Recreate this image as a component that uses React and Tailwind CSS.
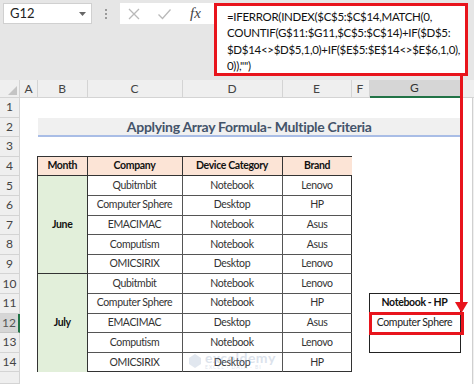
const rows = [
  ['Qubitmbit', 'Notebook', 'Lenovo'],
  ['Computer Sphere', 'Desktop', 'HP'],
  ['EMACIMAC', 'Notebook', 'Asus'],
  ['Computism', 'Notebook', 'Asus'],
  ['OMICSIRIX', 'Desktop', 'Lenovo'],
  ['Qubitmbit', 'Notebook', 'Lenovo'],
  ['Computer Sphere', 'Notebook', 'HP'],
  ['EMACIMAC', 'Desktop', 'Asus'],
  ['Computism', 'Notebook', 'Lenovo'],
  ['OMICSIRIX', 'Desktop', 'HP'],
]

const cols = ['A', 'B', 'C', 'D', 'E', 'F', 'G']

function FormulaBar() {
  return (
    <div className="h-[80px] bg-[#e6e6e6] flex items-start pt-[3px] pl-[3px]">
      <div className="w-[89px] h-[21px] bg-white border border-[#d0d0d0] flex items-center justify-between pl-[6px] pr-[5px] text-[13px] text-[#222]">
        <span>G12</span>
        <svg width="7" height="4" viewBox="0 0 7 4"><path d="M0 0h7L3.5 4z" fill="#666" /></svg>
      </div>
      <div className="w-[28px] h-[21px] flex flex-col items-center justify-center gap-[2px]">
        <span className="w-[2px] h-[2px] bg-[#9a9a9a]" />
        <span className="w-[2px] h-[2px] bg-[#9a9a9a]" />
        <span className="w-[2px] h-[2px] bg-[#9a9a9a]" />
      </div>
      <div className="w-[94px] h-[21px] bg-white flex items-center">
        <svg className="ml-[7px]" width="14" height="14" viewBox="0 0 14 14">
          <path d="M2 2l10 10M12 2L2 12" stroke="#b9b9b9" strokeWidth="1.3" fill="none" />
        </svg>
        <svg className="ml-[16px]" width="15" height="14" viewBox="0 0 15 14">
          <path d="M1.5 7.5l4 4L13.5 2.5" stroke="#b9b9b9" strokeWidth="1.3" fill="none" />
        </svg>
        <span className="ml-[18px] text-[15px] italic text-[#444] font-['Liberation_Serif',serif] leading-none">fx</span>
      </div>
      <div className="w-[254px] h-[73px] bg-white border-[3px] border-[#e8141c] pl-[10px] pt-[3px] text-[11.5px] tracking-[-0.3px] leading-[16.3px] text-[#111] whitespace-pre">
        {'=IFERROR(INDEX($C$5:$C$14,MATCH(0,\nCOUNTIF(G$11:$G11,$C$5:$C$14)+IF($D$5:\n$D$14<>$D$5,1,0)+IF($E$5:$E$14<>$E$6,1,0),\n0)),"")'}
      </div>
    </div>
  )
}

export default function App() {
  return (
    <div className="relative w-[474px] h-[384px] overflow-hidden bg-white font-['Lato',sans-serif]">
      <FormulaBar />

      <div className="grid grid-cols-[20px_18px_49.5px_95px_100px_69px_18px_91px_1fr] grid-rows-[18px_repeat(14,19.6px)_1fr] h-[304px]">
        {/* corner */}
        <div className="bg-[#efefef] border-r border-b border-[#d4d4d4] flex items-end justify-end pr-[2px] pb-[2px]">
          <svg width="9" height="9" viewBox="0 0 9 9"><path d="M9 0v9H0z" fill="#c4c4c4" /></svg>
        </div>
        {cols.map((c) => (
          <div
            key={c}
            className={
              c === 'G'
                ? 'bg-[#d6d6d6] border-b-2 border-[#217346] border-r border-r-[#c6c6c6] flex items-center justify-center text-[12px] text-[#333]'
                : 'bg-[#efefef] border-r border-b border-[#d4d4d4] flex items-center justify-center text-[12px] text-[#444]'
            }
          >
            {c}
          </div>
        ))}
        <div className="bg-[#efefef] border-b border-[#d4d4d4]" />

        {/* row headers */}
        {Array.from({ length: 15 }, (_, i) => (
          <div
            key={i}
            style={{ gridRowStart: i + 2 }}
            className={
              i === 11
                ? 'col-start-1 bg-[#d6d6d6] border-r-2 border-[#217346] border-b border-b-[#c6c6c6] flex items-center justify-center text-[12px] text-[#555]'
                : 'col-start-1 bg-[#efefef] border-r border-b border-[#d4d4d4] flex items-center justify-center text-[12px] text-[#444]'
            }
          >
            {i < 14 ? i + 1 : ''}
          </div>
        ))}

        {/* title */}
        <div className="col-start-3 col-span-6 row-start-3 bg-[#f0f0f0] border-b-2 border-[#a9bde6] flex items-center justify-center text-[14px] tracking-[-0.3px] font-bold text-[#44546a]">
          Applying Array Formula- Multiple Criteria
        </div>

        {/* data table */}
        <div className="col-start-3 col-span-4 row-start-5 row-span-11 grid grid-cols-[49.5px_95px_100px_69px] grid-rows-[repeat(11,19.6px)] border border-[#333] -mt-px -ml-px text-[10.5px] tracking-[-0.35px]">
          {['Month', 'Company', 'Device Category', 'Brand'].map((h, i) => (
            <div
              key={h}
              className={`bg-[#fce4d6] border-b border-[#333] flex items-center justify-center font-bold text-[#111] ${i < 3 ? 'border-r' : ''}`}
            >
              {h}
            </div>
          ))}
          <div className="col-start-1 row-start-2 row-span-5 bg-[#e2efda] border-r border-b border-[#333] flex items-center justify-center font-bold text-[#111]">
            June
          </div>
          <div className="col-start-1 row-start-7 row-span-5 bg-[#e2efda] border-r border-[#333] flex items-center justify-center font-bold text-[#111]">
            July
          </div>
          {rows.map((r, i) =>
            r.map((v, j) => (
              <div
                key={`${i}-${j}`}
                style={{ gridRowStart: i + 2, gridColumnStart: j + 2 }}
                className={`flex items-center justify-center text-[#333] border-[#555] ${j < 2 ? 'border-r' : ''} ${i < 9 ? 'border-b' : ''}`}
              >
                {v}
              </div>
            ))
          )}
        </div>

        {/* result box */}
        <div className="col-start-8 row-start-12 row-span-3 grid grid-rows-[repeat(3,19.6px)] border border-[#222] -mt-px -ml-px text-[10.5px] tracking-[-0.35px]">
          <div className="border-b border-[#222] flex items-center justify-center font-bold text-[#111]">
            Notebook - HP
          </div>
          <div className="border-b border-[#222] flex items-center justify-center text-[#222]">
            Computer Sphere
          </div>
          <div />
        </div>

        {/* right edge */}
        <div className="col-start-9 row-start-2 row-span-15 flex justify-end">
          <div className="w-[2px] border-l border-[#d0d0d0] bg-[#f0f0f0]" />
        </div>
      </div>

      {/* arrow + highlight overlay */}
      <div className="absolute left-[460px] top-[76px] w-[3px] h-[228px] bg-[#e8141c]" />
      <svg className="absolute left-[455px] top-[302px]" width="13" height="11" viewBox="0 0 13 11">
        <path d="M0 0h13L6.5 11z" fill="#e8141c" />
      </svg>
      <div className="absolute left-[369px] top-[312px] w-[95px] h-[23px] border-[3px] border-[#e8141c]" />

      {/* watermark */}
      <div className="absolute left-[188px] top-[351px] flex items-center gap-[3px] opacity-30 pointer-events-none">
        <svg width="14" height="16" viewBox="0 0 14 16">
          <path d="M7 1L1 5v6l6 4 6-4V5z" fill="#9fb1cc" />
        </svg>
        <div className="flex flex-col leading-none">
          <span className="text-[14px] font-bold text-[#8ea3c2] tracking-[0.5px]">exceldemy</span>
          <span className="text-[5px] text-[#8ea3c2] tracking-[1px]">EXCEL · DATA · BI</span>
        </div>
      </div>
    </div>
  )
}
